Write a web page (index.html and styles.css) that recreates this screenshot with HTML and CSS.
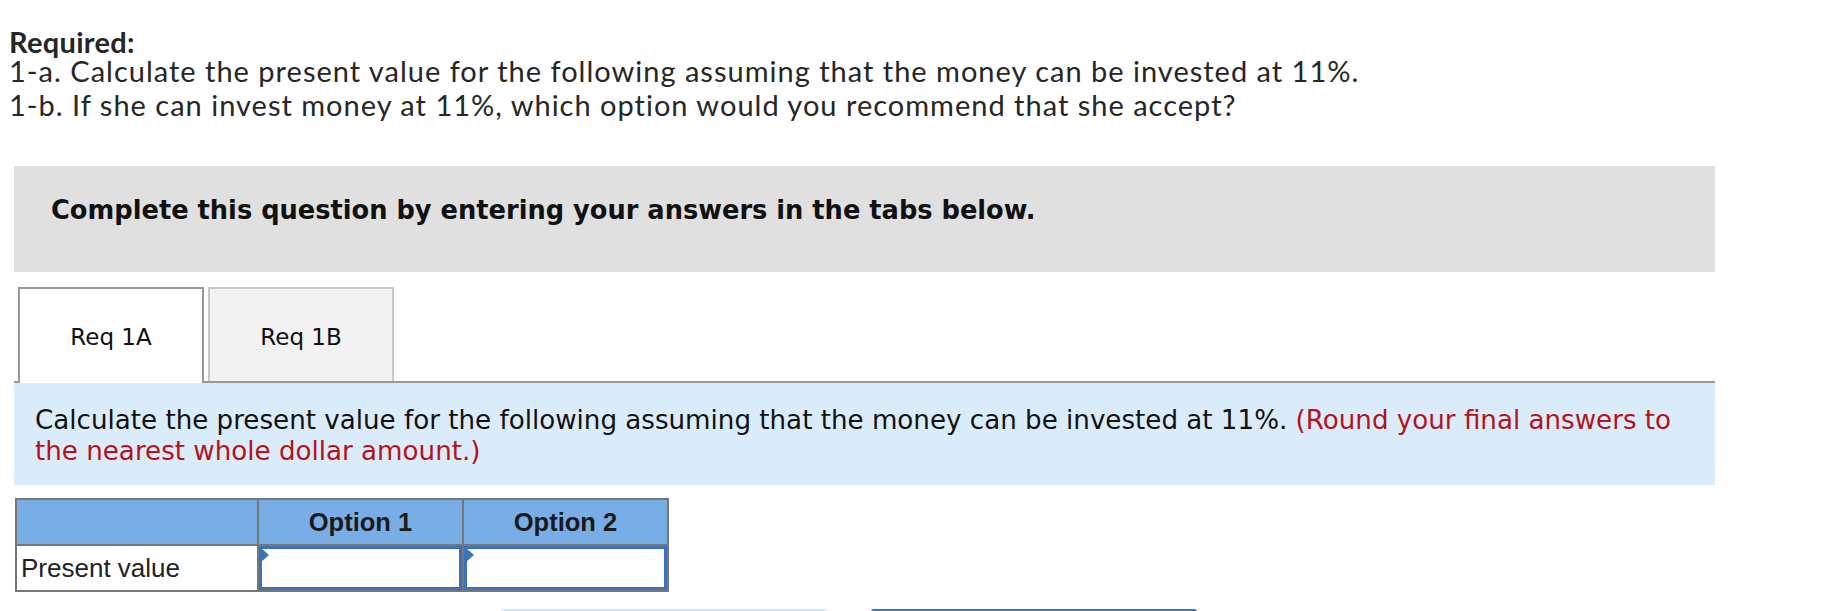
FILE: index.html
```html
<!DOCTYPE html>
<html>
<head>
<meta charset="utf-8">
<link rel="stylesheet" href="styles.css">
</head>
<body>
<div class="required">
  <div class="req-title">Required:</div>
  <div class="req-line">1-a. Calculate the present value for the following assuming that the money can be invested at 11%.</div>
  <div class="req-line second">1-b. If she can invest money at 11%, which option would you recommend that she accept?</div>
</div>

<div class="instructions">Complete this question by entering your answers in the tabs below.</div>

<div class="tabs">
  <div class="tab active">Req 1A</div>
  <div class="tab">Req 1B</div>
</div>

<div class="prompt">Calculate the present value for the following assuming that the money can be invested at 11%. <span class="red">(Round your final answers to the nearest whole dollar amount.)</span></div>

<table class="grid">
  <tr class="head">
    <th class="c1"></th>
    <th class="c2">Option 1</th>
    <th class="c3">Option 2</th>
  </tr>
  <tr>
    <td class="label">Present value</td>
    <td class="inp"><div class="box"><span class="flag"></span></div></td>
    <td class="inp"><div class="box"><span class="flag"></span></div></td>
  </tr>
</table>

<div class="buttons">
  <div class="btn prev"></div>
  <div class="btn next"></div>
</div>
</body>
</html>
```
FILE: styles.css
```css
html, body {
  margin: 0;
  padding: 0;
  background: #fff;
}
body {
  width: 1826px;
  overflow: hidden;
}
.required {
  padding: 27px 0 0 9px;
  font-family: Lato, "Open Sans", sans-serif;
  color: #262626;
  font-size: 29px;
  letter-spacing: 1px;
}
.req-title {
  font-weight: bold;
  line-height: 29px;
  letter-spacing: 0.3px;
}
.req-line {
  line-height: 29px;
}
.req-line.second {
  margin-top: 5px;
}
.instructions {
  margin: 47px 0 0 14px;
  width: 1701px;
  height: 106px;
  box-sizing: border-box;
  background: #e0e0e0;
  font-family: "DejaVu Sans", Verdana, sans-serif;
  font-weight: bold;
  font-size: 25.7px;
  line-height: 30px;
  color: #111;
  padding: 29px 0 0 37px;
}
.tabs {
  display: flex;
  gap: 4px;
  margin: 15px 0 0 14px;
  width: 1701px;
  border-bottom: 2px solid #999;
  padding-left: 4px;
  box-sizing: border-box;
  height: 96px;
}
.tab {
  width: 186px;
  height: 94px;
  box-sizing: border-box;
  border: 2px solid #c8c8c8;
  border-bottom: none;
  background: #f2f2f2;
  display: flex;
  align-items: center;
  justify-content: center;
  font-family: "DejaVu Sans", Verdana, sans-serif;
  font-size: 23px;
  color: #111;
  padding-top: 4px;
}
.tab.active {
  background: #fff;
  border-color: #999;
  height: 96px;
  padding-top: 2px;
}
.prompt {
  margin: 0 0 0 14px;
  width: 1701px;
  height: 102px;
  box-sizing: border-box;
  background: #daecfa;
  font-family: "DejaVu Sans", Verdana, sans-serif;
  font-size: 26.15px;
  line-height: 31px;
  color: #111;
  padding: 22px 36px 0 21px;
}
.red {
  color: #b5121b;
}
.grid {
  margin: 13px 0 0 15px;
  border-collapse: collapse;
  font-family: "Liberation Sans", Arial, sans-serif;
}
.grid th, .grid td {
  border: 2px solid #777;
  padding: 0;
  height: 44px;
}
.grid th {
  background: #79ade5;
  font-size: 25.5px;
  font-weight: bold;
  color: #1a1a1a;
}
.grid .c1 { width: 240px; }
.grid .c2 { width: 203px; }
.grid .c3 { width: 203px; }
.grid .label {
  font-size: 26px;
  color: #222;
  padding-left: 4px;
  text-align: left;
}
.grid .inp {
  background: #fff;
  vertical-align: top;
}
.box {
  position: relative;
  height: 44px;
  border: 3px solid #3a73b8;
  box-sizing: border-box;
  background: #fff;
}
.flag {
  position: absolute;
  left: -1px;
  top: -1px;
  width: 0;
  height: 0;
  border-top: 7px solid transparent;
  border-bottom: 7px solid transparent;
  border-left: 8px solid #3a73b8;
}
.buttons {
  display: flex;
  margin: 17px 0 0 501px;
  gap: 44px;
}
.btn {
  width: 326px;
  height: 40px;
  border-radius: 3px;
}
.prev {
  background: #d3e6f7;
}
.next {
  background: #3a77c3;
}
```
